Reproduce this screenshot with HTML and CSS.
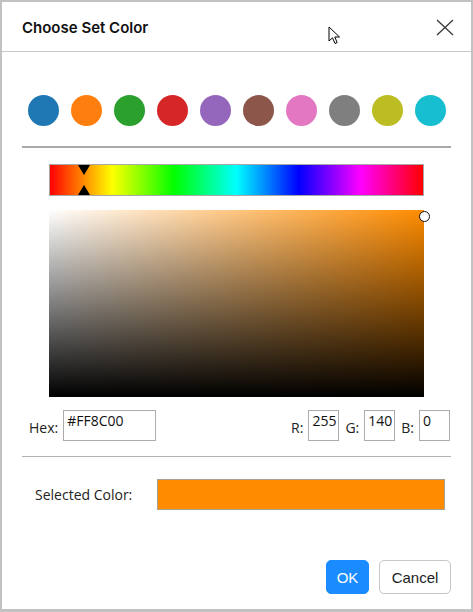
FILE: index.html
```html
<!DOCTYPE html>
<html>
<head>
<meta charset="utf-8">
<link rel="stylesheet" href="styles.css">
</head>
<body>
<div class="dialog">
  <div class="header">
    <div class="title">Choose Set Color</div>
    <svg class="close" width="18" height="17" viewBox="0 0 18 17"><path d="M1 1 L17 16 M17 1 L1 16" stroke="#3a3a3a" stroke-width="1.3" fill="none"/></svg>
    <svg class="cursor" width="14" height="20" viewBox="0 0 14 20"><path d="M1 1 L1 15 L4.5 11.8 L7 17.5 L9.2 16.6 L6.8 11 L11.5 11 Z" fill="#fff" stroke="#000" stroke-width="1" stroke-linejoin="round"/></svg>
  </div>
  <div class="content">
    <div class="swatches">
      <span class="dot" style="background:#1f77b4"></span>
      <span class="dot" style="background:#ff7f0e"></span>
      <span class="dot" style="background:#2ca02c"></span>
      <span class="dot" style="background:#d62728"></span>
      <span class="dot" style="background:#9467bd"></span>
      <span class="dot" style="background:#8c564b"></span>
      <span class="dot" style="background:#e377c2"></span>
      <span class="dot" style="background:#7f7f7f"></span>
      <span class="dot" style="background:#bcbd22"></span>
      <span class="dot" style="background:#17becf"></span>
    </div>
    <div class="rule thick"></div>
    <div class="picker">
      <div class="hue">
        <div class="marker" style="left:34px">
          <span class="tri down"></span>
          <span class="tri up"></span>
        </div>
      </div>
      <div class="sv">
        <div class="sv-white"></div>
        <div class="sv-black"></div>
        <span class="handle"></span>
      </div>
    </div>
    <div class="values">
      <label class="lbl hexlbl">Hex:</label>
      <div class="box hexbox">#FF8C00</div>
      <div class="spacer"></div>
      <label class="lbl">R:</label>
      <div class="box small">255</div>
      <label class="lbl">G:</label>
      <div class="box small">140</div>
      <label class="lbl">B:</label>
      <div class="box small">0</div>
    </div>
    <div class="rule thin"></div>
    <div class="selected">
      <span class="lbl sel-lbl">Selected Color:</span>
      <div class="sel-swatch"></div>
    </div>
    <div class="buttons">
      <button class="btn ok">OK</button>
      <button class="btn cancel">Cancel</button>
    </div>
  </div>
</div>
</body>
</html>
```

FILE: styles.css
```css
* { box-sizing: border-box; }
html, body { margin: 0; padding: 0; background: #fff; }
.dialog {
  width: 473px;
  height: 612px;
  border: 2px solid #c2c2c2;
  border-bottom-width: 3px;
  background: #fff;
  display: flex;
  flex-direction: column;
  font-family: "Open Sans", "Noto Sans", sans-serif;
}
.header {
  position: relative;
  height: 50px;
  border-bottom: 1px solid #c8c8c8;
  display: flex;
  align-items: center;
  padding: 0 17px 0 20px;
  flex-shrink: 0;
}
.title {
  font-family: Inter, "Liberation Sans", sans-serif;
  font-weight: 600;
  font-size: 15px;
  color: #111;
  flex: 1;
  margin-top: 1px;
}
.close { display: block; margin-top: 2px; }
.cursor { position: absolute; left: 326px; top: 24px; }
.content {
  padding: 0 20px;
  display: flex;
  flex-direction: column;
}
.swatches {
  display: flex;
  justify-content: center;
  gap: 12px;
  margin-top: 43px;
}
.dot {
  width: 31px;
  height: 31px;
  border-radius: 50%;
  display: block;
}
.rule { background: #a9a9a9; }
.rule.thick { height: 2px; margin-top: 20px; }
.rule.thin { height: 1px; margin-top: 15px; background: #b3b3b3; }
.picker {
  padding: 0 27px;
  display: flex;
  flex-direction: column;
}
.hue {
  position: relative;
  margin-top: 16px;
  height: 32px;
  border: 1px solid #a8a8a8;
  background: linear-gradient(to right, #ff0000 0%, #ffff00 16.667%, #00ff00 33.333%, #00ffff 50%, #0000ff 66.667%, #ff00ff 83.333%, #ff0000 100%);
}
.marker {
  position: absolute;
  top: 0;
  bottom: 0;
  width: 0;
}
.tri {
  position: absolute;
  left: -6px;
  width: 0;
  height: 0;
  border-left: 6px solid transparent;
  border-right: 6px solid transparent;
}
.tri.down { top: 0; border-top: 10px solid #000; }
.tri.up { bottom: 0; border-bottom: 10px solid #000; }
.sv {
  position: relative;
  margin-top: 14px;
  height: 187px;
  background: #ff8c00;
}
.sv-white {
  position: absolute;
  inset: 0;
  background: linear-gradient(to right, #fff, rgba(255,255,255,0));
}
.sv-black {
  position: absolute;
  inset: 0;
  background: linear-gradient(to bottom, rgba(0,0,0,0), #000);
}
.handle {
  position: absolute;
  right: -6px;
  top: 1px;
  width: 11px;
  height: 11px;
  border-radius: 50%;
  border: 1.5px solid #111;
  background: #fff;
}
.values {
  display: flex;
  align-items: center;
  margin-top: 13px;
  padding: 0 1px 0 7px;
}
.lbl {
  font-size: 14px;
  color: #222;
  margin-top: 3px;
}
.hexlbl { margin-right: 5px; }
.box {
  height: 31px;
  border: 1px solid #ababab;
  font-size: 14px;
  color: #111;
  padding: 1px 0 0 3px;
  line-height: 18px;
}
.hexbox { width: 93px; }
.spacer { flex: 1; }
.box.small { width: 31px; margin-left: 5px; margin-right: 6px; }
.box.small:last-child { margin-right: 0; }
.selected {
  display: flex;
  align-items: center;
  margin-top: 22px;
  padding-left: 13px;
  padding-right: 6px;
}
.sel-lbl { width: 122px; font-size: 14px; margin-top: 0; }
.sel-swatch {
  flex: 1;
  height: 31px;
  background: #ff8c00;
  border: 1px solid #a9a08f;
}
.buttons {
  display: flex;
  justify-content: flex-end;
  gap: 10px;
  margin-top: 50px;
}
.btn {
  height: 34px;
  font-family: "Liberation Sans", Arial, sans-serif;
  font-size: 15px;
  border-radius: 5px;
  padding: 0;
  cursor: pointer;
}
.ok {
  width: 43px;
  background: #1a8cff;
  color: #fff;
  border: 1px solid #1a8cff;
}
.cancel {
  width: 72px;
  background: #fff;
  color: #222;
  border: 1px solid #c6c6c6;
}
```
